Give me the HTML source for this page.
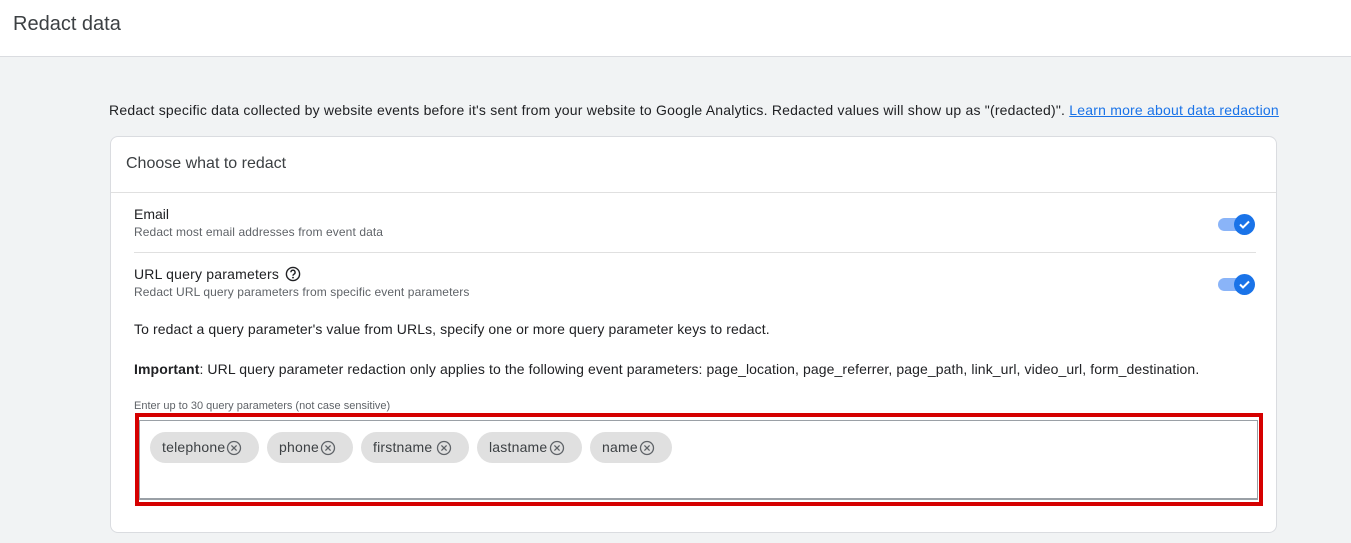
<!DOCTYPE html>
<html><head><style>
body{margin:0;width:1351px;height:543px;overflow:hidden;background:#f1f3f4;font-family:"Liberation Sans",Arial,sans-serif;color:#202124;position:relative}
.hdr{position:absolute;left:0;top:0;width:1351px;height:56px;background:#fff;border-bottom:1px solid #dadce0}
.hdr span{position:absolute;left:13px;top:13px;font-size:20px;color:#3c4043}
.a{position:absolute;white-space:nowrap}
.card{position:absolute;left:110px;top:136px;width:1165px;height:395px;background:#fff;border:1px solid #dadce0;border-radius:8px}
.tg{position:absolute;width:36px;height:24px}
.tg .tr{position:absolute;left:0;top:6px;width:30px;height:13px;border-radius:7px;background:#8ab4f8}
.tg .kn{position:absolute;left:16px;top:2px;width:21px;height:21px;border-radius:50%;background:#1a73e8}
.chip{position:absolute;top:432px;height:31px;border-radius:16px;background:#e0e0e0;font-size:14px;color:#3c4043;line-height:31px;padding-left:12px;box-sizing:border-box;letter-spacing:0.2px}
.chip svg{position:absolute;top:8px}
</style></head><body>
<div class="hdr"><span>Redact data</span></div>
<div class="a" style="left:109px;top:102px;font-size:14px;color:#202124;letter-spacing:0.21px">Redact specific data collected by website events before it's sent from your website to Google Analytics. Redacted values will show up as "(redacted)". <span style="color:#1a73e8;text-decoration:underline">Learn more about data redaction</span></div>
<div class="card"></div>
<div class="a" style="left:126px;top:155px;font-size:16px;color:#3c4043">Choose what to redact</div>
<div class="a" style="left:111px;top:192px;width:1165px;height:1px;background:#e0e0e0"></div>
<div class="a" style="left:134px;top:206px;font-size:14px;color:#202124">Email</div>
<div class="a" style="left:134px;top:225px;font-size:12px;color:#5f6368;letter-spacing:0.1px">Redact most email addresses from event data</div>
<div class="a" style="left:134px;top:252px;width:1122px;height:1px;background:#e0e0e0"></div>
<div class="a" style="left:134px;top:266px;font-size:14px;color:#202124;letter-spacing:0.2px">URL query parameters <svg width="16" height="16" viewBox="0 0 16 16" style="vertical-align:-3px;margin-left:2px"><circle cx="8" cy="8" r="6.6" fill="none" stroke="#202124" stroke-width="1.4"/><path d="M5.9 6.3a2.1 2.1 0 1 1 3 1.9c-.7.4-.9.8-.9 1.5" fill="none" stroke="#202124" stroke-width="1.4"/><circle cx="8" cy="11.6" r=".9" fill="#202124"/></svg></div>
<div class="a" style="left:134px;top:285px;font-size:12px;color:#5f6368;letter-spacing:0.1px">Redact URL query parameters from specific event parameters</div>
<div class="tg" style="left:1218px;top:212px"><div class="tr"></div><div class="kn"></div><svg class="a" style="left:20px;top:6px" width="13" height="13" viewBox="0 0 13 13"><path d="M2 6.5l3 3 6-6" fill="none" stroke="#fff" stroke-width="2"/></svg></div>
<div class="tg" style="left:1218px;top:272px"><div class="tr"></div><div class="kn"></div><svg class="a" style="left:20px;top:6px" width="13" height="13" viewBox="0 0 13 13"><path d="M2 6.5l3 3 6-6" fill="none" stroke="#fff" stroke-width="2"/></svg></div>
<div class="a" style="left:134px;top:321px;font-size:14px;letter-spacing:0.1px">To redact a query parameter's value from URLs, specify one or more query parameter keys to redact.</div>
<div class="a" style="left:134px;top:361px;font-size:14px;letter-spacing:0.1px"><b>Important</b>: URL query parameter redaction only applies to the following event parameters: page_location, page_referrer, page_path, link_url, video_url, form_destination.</div>
<div class="a" style="left:134px;top:400px;font-size:11px;color:#5f6368">Enter up to 30 query parameters (not case sensitive)</div>
<div class="a" style="left:135px;top:413px;width:1120px;height:85px;border:4px solid #d50000"></div>
<div class="a" style="left:139px;top:420px;width:1117px;height:77px;border:1px solid #9aa0a6;border-bottom:2px solid #9aa0a6;background:#fff"></div>
<div class="chip" style="left:150px;width:109px">telephone<svg style="left:76px" width="16" height="16" viewBox="0 0 16 16"><circle cx="8" cy="8" r="6.5" fill="none" stroke="#5f6368" stroke-width="1.3"/><path d="M5.4 5.4l5.2 5.2M10.6 5.4l-5.2 5.2" stroke="#5f6368" stroke-width="1.3"/></svg></div>
<div class="chip" style="left:267px;width:86px">phone<svg style="left:53px" width="16" height="16" viewBox="0 0 16 16"><circle cx="8" cy="8" r="6.5" fill="none" stroke="#5f6368" stroke-width="1.3"/><path d="M5.4 5.4l5.2 5.2M10.6 5.4l-5.2 5.2" stroke="#5f6368" stroke-width="1.3"/></svg></div>
<div class="chip" style="left:361px;width:108px">firstname<svg style="left:75px" width="16" height="16" viewBox="0 0 16 16"><circle cx="8" cy="8" r="6.5" fill="none" stroke="#5f6368" stroke-width="1.3"/><path d="M5.4 5.4l5.2 5.2M10.6 5.4l-5.2 5.2" stroke="#5f6368" stroke-width="1.3"/></svg></div>
<div class="chip" style="left:477px;width:105px">lastname<svg style="left:72px" width="16" height="16" viewBox="0 0 16 16"><circle cx="8" cy="8" r="6.5" fill="none" stroke="#5f6368" stroke-width="1.3"/><path d="M5.4 5.4l5.2 5.2M10.6 5.4l-5.2 5.2" stroke="#5f6368" stroke-width="1.3"/></svg></div>
<div class="chip" style="left:590px;width:82px">name<svg style="left:49px" width="16" height="16" viewBox="0 0 16 16"><circle cx="8" cy="8" r="6.5" fill="none" stroke="#5f6368" stroke-width="1.3"/><path d="M5.4 5.4l5.2 5.2M10.6 5.4l-5.2 5.2" stroke="#5f6368" stroke-width="1.3"/></svg></div>
</body></html>
